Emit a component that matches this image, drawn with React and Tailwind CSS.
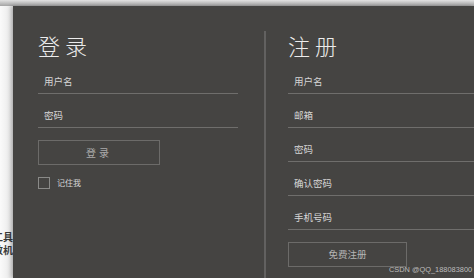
const cjk = { fontFamily: '"Noto Sans CJK SC", "Noto Sans", sans-serif' }

function Field({ label }) {
  return (
    <div className="h-[34px] flex items-end border-b border-[#6f6e6c] pl-[6px] pb-[5px]">
      <span className="text-[9.5px] leading-[14px] text-[#d6d6d6]">{label}</span>
    </div>
  )
}

export default function App() {
  return (
    <div className="w-[474px] h-[278px] overflow-hidden flex flex-col bg-white relative" style={cjk}>
      <div className="h-[6px] bg-gradient-to-b from-[#e2e2e2] to-[#a4a4a4]" />
      <div className="flex flex-1 min-h-0">
        <div className="w-[13px] overflow-hidden flex flex-col items-end gap-[2px] pt-[225px] bg-gradient-to-r from-[#fafafa] to-[#e6e6e6]">
          <span className="whitespace-nowrap text-[10px] leading-[11px] font-bold text-[#3a3a3a]">工具</span>
          <span className="whitespace-nowrap text-[10px] leading-[11px] font-bold text-[#3a3a3a]">数机</span>
        </div>
        <div className="flex-1 bg-[#454442] flex pl-[25px] shadow-[-2px_0_4px_rgba(0,0,0,0.25)]">
          {/* 登录 */}
          <div className="w-[200px] flex flex-col pt-[25px]">
            <h1 className="h-[29px] text-[22px] leading-[29px] font-light tracking-[5px] text-[#ececec]">登录</h1>
            <Field label="用户名" />
            <Field label="密码" />
            <button className="mt-[12px] w-[122px] h-[25px] border border-[#6c6b69] text-[10px] tracking-[3px] text-[#ababab] flex items-center justify-center">
              登录
            </button>
            <label className="mt-[12px] flex items-center gap-[7px]">
              <span className="w-[12px] h-[12px] border border-[#8a8a88]" />
              <span className="text-[8px] text-[#d6d6d6]">记住我</span>
            </label>
          </div>

          <div className="w-[2px] bg-[#626160] mt-[25px] ml-[26px] mr-[22px]" />

          {/* 注册 */}
          <div className="flex-1 flex flex-col pt-[25px]">
            <h1 className="h-[29px] text-[22px] leading-[29px] font-light tracking-[5px] text-[#ececec]">注册</h1>
            <Field label="用户名" />
            <Field label="邮箱" />
            <Field label="密码" />
            <Field label="确认密码" />
            <Field label="手机号码" />
            <button className="mt-[12px] w-[119px] h-[25px] border border-[#6c6b69] text-[9.5px] text-[#b5b5b5] flex items-center justify-center">
              免费注册
            </button>
          </div>
        </div>
      </div>
      <span
        className="absolute left-[389px] top-[265px] whitespace-nowrap text-[7.4px] leading-[10px] text-[#bdbdbd]"
        style={{ fontFamily: '"Liberation Sans", Arial, sans-serif' }}
      >
        CSDN @QQ_188083800
      </span>
    </div>
  )
}
